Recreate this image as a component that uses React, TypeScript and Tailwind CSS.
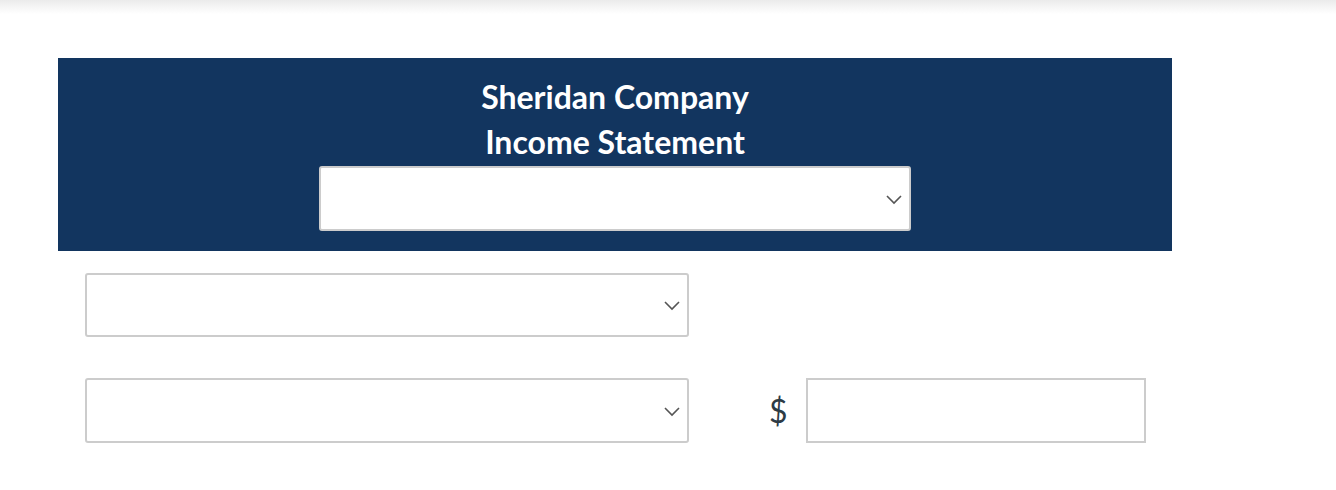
import { ChangeEvent, useState } from 'react'

function Chevron() {
  return (
    <svg
      className="pointer-events-none absolute right-[7px] top-1/2 -translate-y-1/2"
      width="20"
      height="14"
      viewBox="0 0 20 14"
      fill="none"
    >
      <path d="M3 4l7 7 7-7" stroke="#555555" strokeWidth="1.6" />
    </svg>
  )
}

function Dropdown({ className }: { className: string }) {
  const [value, setValue] = useState('')
  return (
    <div className={`relative ${className}`}>
      <select
        value={value}
        onChange={(e: ChangeEvent<HTMLSelectElement>) => setValue(e.target.value)}
        className="h-full w-full appearance-none rounded-[3px] border-2 border-[#cccccc] bg-white px-3 text-[16px] text-[#2d3b45] outline-none"
      >
        <option value=""></option>
      </select>
      <Chevron />
    </div>
  )
}

export default function App() {
  const [amount, setAmount] = useState('')

  return (
    <div className="min-h-[490px] bg-white font-['Lato','Liberation_Sans',sans-serif]">
      {/* top shadow */}
      <div className="h-[14px] bg-gradient-to-b from-[#ebebeb] to-white" />

      <div className="px-[58px] pt-[44px]">
        {/* Header */}
        <div className="flex w-[1114px] flex-col items-center bg-[#12355f] pt-[16px] pb-[20px]">
          <div className="text-center text-[32px] font-bold leading-[45px] text-white">
            <div>Sheridan Company</div>
            <div>Income Statement</div>
          </div>
          <Dropdown className="mt-[2px] h-[65px] w-[592px]" />
        </div>

        {/* Rows */}
        <div className="flex flex-col gap-[41px] pl-[27px] pt-[22px]">
          <Dropdown className="h-[64px] w-[604px]" />
          <div className="flex items-center">
            <Dropdown className="h-[65px] w-[604px]" />
            <span className="ml-[80px] w-[37px] text-[32px] font-normal leading-none text-[#2d3b45]">$</span>
            <input
              type="text"
              value={amount}
              onChange={(e) => setAmount(e.target.value)}
              className="h-[65px] w-[340px] border-2 border-[#cccccc] bg-white px-3 text-[16px] text-[#2d3b45] outline-none"
            />
          </div>
        </div>
      </div>
    </div>
  )
}
